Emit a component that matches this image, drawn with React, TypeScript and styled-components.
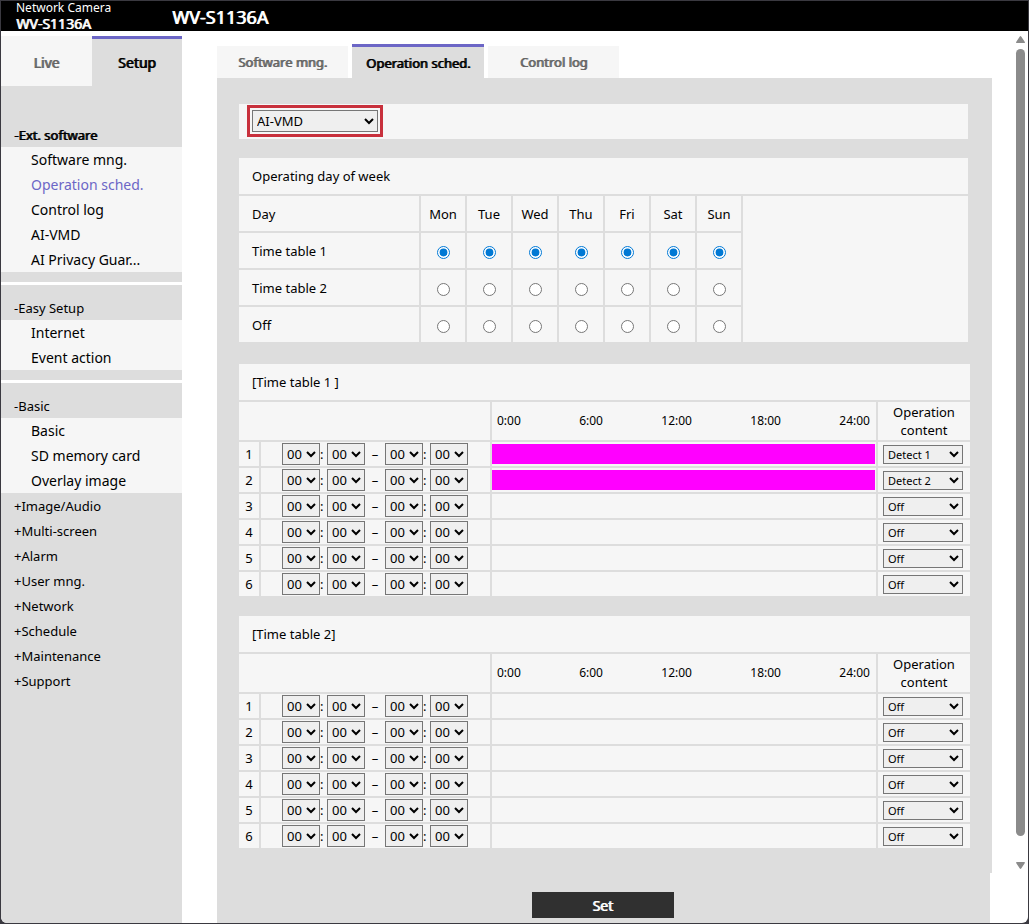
import React from "react";
import styled, { createGlobalStyle, css } from "styled-components";

const accent = "#6c66c6";
const gray = "#dddddd";
const light = "#f6f6f6";

const GlobalStyle = createGlobalStyle`
  * { box-sizing: border-box; }
  body {
    margin: 0;
    background: #3a3940;
    color: #000;
    font: 13px/18px "Noto Sans", sans-serif;
  }
  select, button, input { font-family: inherit; }
`;

const heavy = css`
  text-shadow: 1px 0 currentColor;
`;

const Frame = styled.div`
  min-height: 100vh;
  padding: 1px;
  display: flex;
`;

const Window = styled.div`
  flex: 1;
  min-width: 0;
  display: flex;
  flex-direction: column;
  background: #fff;
  border-radius: 0 0 6px 6px;
`;

const Header = styled.header`
  display: flex;
  height: 30px;
  background: #000;
  color: #fff;
`;

const Brand = styled.div`
  width: 156px;
  margin-left: 15px;
  font-size: 12px;
  line-height: 14px;
`;

const BrandModel = styled.div`
  font-size: 14px;
  line-height: 18px;
  ${heavy}
`;

const Model = styled.h1`
  margin: 0;
  font-size: 18px;
  font-weight: 400;
  line-height: 33px;
  ${heavy}
`;

const Body = styled.div`
  flex: 1;
  display: flex;
  align-items: stretch;
  padding-top: 5px;
`;

const Sidebar = styled.aside`
  width: 181px;
  flex: none;
  border-bottom-left-radius: 6px;
  background: ${gray};
`;

const ModeTabs = styled.div`
  display: flex;
  margin-bottom: 36px;
`;

const ModeTab = styled.button<{ $active?: boolean }>`
  flex: 1;
  height: 50px;
  padding: 0;
  border: 0;
  border-top: 3px solid ${(p) => (p.$active ? accent : light)};
  background: ${(p) => (p.$active ? gray : light)};
  color: ${(p) => (p.$active ? "#000" : "#666")};
  font-size: 14px;
  ${heavy}
`;

const Group = styled.section<{ $divided?: boolean }>`
  ${(p) =>
    p.$divided &&
    css`
      margin-top: 10px;
      padding-top: 10px;
      border-top: 3px solid #fff;
    `}
`;

const GroupLink = styled.a<{ $active?: boolean }>`
  display: block;
  padding: 2px 0 0 13px;
  line-height: 23px;
  color: #000;
  text-decoration: none;
  ${(p) => p.$active && heavy}
`;

const SubList = styled.nav`
  background: ${light};
`;

const SubLink = styled.a<{ $active?: boolean }>`
  display: block;
  padding-left: 30px;
  font-size: 14px;
  line-height: 25px;
  color: ${(p) => (p.$active ? accent : "#000")};
  text-decoration: none;
`;

const Main = styled.main`
  flex: 1;
  min-width: 0;
  display: flex;
  flex-direction: column;
  padding: 8px 24px 0 35px;
`;

const PageTabs = styled.div`
  display: flex;
  align-items: flex-end;
  gap: 4px;
`;

const PageTab = styled.button<{ $active?: boolean }>`
  width: ${(p) => (p.$active ? 132 : 131)}px;
  height: ${(p) => (p.$active ? 34 : 32)}px;
  padding: 0;
  border: 0;
  border-top: ${(p) => (p.$active ? `3px solid ${accent}` : "0")};
  background: ${(p) => (p.$active ? gray : light)};
  color: ${(p) => (p.$active ? "#000" : "#666")};
  font-size: 13px;
  ${heavy}
`;

const Form = styled.form`
  flex: 1;
  display: flex;
  flex-direction: column;
`;

const Panel = styled.div`
  padding: 26px 20px 7px;
  background: ${gray};
`;

const AppBar = styled.div`
  margin: 0 4px 17px 2px;
  padding: 1px 0 2px 8px;
  display: flex;
  background: ${light};
`;

const Highlight = styled.div`
  display: flex;
  padding: 2px;
  border: 3px solid #c8303c;
`;

const Select = styled.select<{ $kind: "app" | "time" | "operation" }>`
  width: ${(p) => ({ app: 126, time: 38, operation: 80 })[p.$kind]}px;
  height: ${(p) => (p.$kind === "operation" ? 19 : 22)}px;
  padding: 0;
  border: 1px solid #767676;
  border-radius: 0;
  background-color: #efefef;
  color: #000;
  font-size: ${(p) => (p.$kind === "operation" ? 11 : 13)}px;
  vertical-align: middle;
`;

const Table = styled.table<{ $narrow?: boolean }>`
  width: ${(p) => (p.$narrow ? "calc(100% - 2px)" : "100%")};
  margin-bottom: ${(p) => (p.$narrow ? 18 : 16)}px;
  border-spacing: 2px;
  table-layout: fixed;

  th, td {
    padding: 0;
    background: ${light};
    font-weight: 400;
  }
`;

const TitleCell = styled.th`
  height: 36px;
  text-align: left;
  text-indent: 13px;
`;

const DayLabel = styled.th`
  height: 35px;
  text-align: left;
  text-indent: 13px;
`;

const DayCell = styled.td`
  text-align: center;
`;

const Radio = styled.input`
  width: 13px;
  height: 13px;
  margin: 1px 0 0 1px;
  accent-color: #0078d4;
  vertical-align: middle;
`;

const HeadCell = styled.th`
  height: 38px;
`;

const Scale = styled.div`
  display: flex;
  justify-content: space-between;
  padding: 0 6px 0 5px;
  font-size: 12px;
`;

const NumberCell = styled.th`
  height: 24px;
  text-align: center;
`;

const TimeRange = styled.div`
  display: flex;
  align-items: center;
  padding-left: 21px;
`;

const Mark = styled.span<{ $wide?: boolean }>`
  width: ${(p) => (p.$wide ? 20 : 7)}px;
  text-align: ${(p) => (p.$wide ? "center" : "left")};
`;

const Bar = styled.div`
  height: 20px;
  margin-right: 1px;
  background: #ff00ff;
`;

const OperationCell = styled.td`
  text-align: left;
  line-height: 19px;

  select { margin-left: 5px; }
`;

const Actions = styled.div`
  flex: 1;
  display: flex;
  justify-content: center;
  align-items: flex-start;
  margin-right: 2px;
  padding: 19px 2px 5px 0;
  background: ${gray};
`;

const SetButton = styled.button`
  width: 142px;
  height: 26px;
  border: 0;
  padding: 0;
  background: #303030;
  color: #fff;
  font-size: 14px;
  ${heavy}
`;

const ScrollTrack = styled.div`
  display: flex;
  flex-direction: column;
  align-items: center;
  width: 9px;
  margin-right: 3px;
  padding-bottom: 54px;
`;

const Thumb = styled.div`
  flex: 1;
  width: 9px;
  margin: 6px 0 26px;
  border-radius: 5px;
  background: #8b8b8b;
`;

const Arrow = ({ down }: { down?: boolean }) => (
  <svg width="9" height="7" viewBox="0 0 9 7" fill="#8b8b8b" aria-hidden="true">
    <path
      d={down ? "M1 0h7q1.500 0 .7 1.200L5.200 6.500q-.7.800-1.400 0L.3 1.200Q-.5 0 1 0z" : "M1 7h7q1.500 0 .7-1.200L5.200.5q-.7-.800-1.400 0L.3 5.800Q-.5 7 1 7z"}
    />
  </svg>
);

const days = ["Mon", "Tue", "Wed", "Thu", "Fri", "Sat", "Sun"];
const choices = ["Time table 1", "Time table 2", "Off"];
const hours = Array.from({ length: 24 }, (_, i) => String(i).padStart(2, "0"));
const minutes = Array.from({ length: 60 }, (_, i) => String(i).padStart(2, "0"));
const operations = ["Off", "Detect 1", "Detect 2"];

const groups = [
  { name: "Ext. software", items: ["Software mng.", "Operation sched.", "Control log", "AI-VMD", "AI Privacy Guar..."] },
  { name: "Easy Setup", items: ["Internet", "Event action"] },
  { name: "Basic", items: ["Basic", "SD memory card", "Overlay image"] },
];
const closedGroups = ["Image/Audio", "Multi-screen", "Alarm", "User mng.", "Network", "Schedule", "Maintenance", "Support"];

const TimeSelect = ({ label, values }: { label: string; values: string[] }) => (
  <Select $kind="time" aria-label={label} defaultValue="00">
    {values.map((v) => (
      <option key={v}>{v}</option>
    ))}
  </Select>
);

function DayTable() {
  return (
    <Table $narrow>
      <colgroup>
        <col style={{ width: 180 }} />
        {days.map((d) => (
          <col key={d} style={{ width: 44 }} />
        ))}
        <col />
      </colgroup>
      <tbody>
        <tr>
          <TitleCell colSpan={9}>Operating day of week</TitleCell>
        </tr>
        <tr>
          <DayLabel>Day</DayLabel>
          {days.map((d) => (
            <DayCell key={d} as="th">{d}</DayCell>
          ))}
          <td rowSpan={4} />
        </tr>
        {choices.map((choice, row) => (
          <tr key={choice}>
            <DayLabel>{choice}</DayLabel>
            {days.map((d) => (
              <DayCell key={d}>
                <Radio type="radio" name={d} aria-label={`${d} ${choice}`} defaultChecked={row === 0} />
              </DayCell>
            ))}
          </tr>
        ))}
      </tbody>
    </Table>
  );
}

function TimeTable({ title, content }: { title: string; content: string[] }) {
  return (
    <Table>
      <colgroup>
        <col style={{ width: 20 }} />
        <col style={{ width: 229 }} />
        <col />
        <col style={{ width: 92 }} />
      </colgroup>
      <tbody>
        <tr>
          <TitleCell colSpan={4}>{title}</TitleCell>
        </tr>
        <tr>
          <HeadCell colSpan={2} />
          <HeadCell>
            <Scale>
              {["0:00", "6:00", "12:00", "18:00", "24:00"].map((t) => (
                <span key={t}>{t}</span>
              ))}
            </Scale>
          </HeadCell>
          <HeadCell>
            Operation
            <br />
            content
          </HeadCell>
        </tr>
        {content.map((op, i) => (
          <tr key={i}>
            <NumberCell>{i + 1}</NumberCell>
            <td>
              <TimeRange>
                <TimeSelect label="Start hour" values={hours} />
                <Mark>:</Mark>
                <TimeSelect label="Start minute" values={minutes} />
                <Mark $wide>–</Mark>
                <TimeSelect label="End hour" values={hours} />
                <Mark>:</Mark>
                <TimeSelect label="End minute" values={minutes} />
              </TimeRange>
            </td>
            <td>{op !== "Off" && <Bar />}</td>
            <OperationCell>
              <Select $kind="operation" aria-label="Operation content" defaultValue={op}>
                {operations.map((o) => (
                  <option key={o}>{o}</option>
                ))}
              </Select>
            </OperationCell>
          </tr>
        ))}
      </tbody>
    </Table>
  );
}

export default function App() {
  return (
    <Frame>
      <GlobalStyle />
      <Window>
        <Header>
          <Brand>
            Network Camera
            <BrandModel>WV-S1136A</BrandModel>
          </Brand>
          <Model>WV-S1136A</Model>
        </Header>
        <Body>
          <Sidebar>
            <ModeTabs>
              <ModeTab>Live</ModeTab>
              <ModeTab $active>Setup</ModeTab>
            </ModeTabs>
            {groups.map((g, i) => (
              <Group key={g.name} $divided={i > 0}>
                <GroupLink href="#" $active={i === 0}>-{g.name}</GroupLink>
                <SubList>
                  {g.items.map((item) => (
                    <SubLink key={item} href="#" $active={item === "Operation sched."}>{item}</SubLink>
                  ))}
                </SubList>
              </Group>
            ))}
            {closedGroups.map((name) => (
              <GroupLink key={name} href="#">+{name}</GroupLink>
            ))}
          </Sidebar>
          <Main>
            <PageTabs>
              <PageTab>Software mng.</PageTab>
              <PageTab $active>Operation sched.</PageTab>
              <PageTab>Control log</PageTab>
            </PageTabs>
            <Form onSubmit={(e) => e.preventDefault()}>
              <Panel>
                <AppBar>
                  <Highlight>
                    <Select $kind="app" aria-label="Application" defaultValue="AI-VMD">
                      <option>AI-VMD</option>
                      <option>AI Privacy Guard</option>
                    </Select>
                  </Highlight>
                </AppBar>
                <DayTable />
                <TimeTable title="[Time table 1 ]" content={["Detect 1", "Detect 2", "Off", "Off", "Off", "Off"]} />
                <TimeTable title="[Time table 2]" content={["Off", "Off", "Off", "Off", "Off", "Off"]} />
              </Panel>
              <Actions>
                <SetButton type="submit">Set</SetButton>
              </Actions>
            </Form>
          </Main>
          <ScrollTrack>
            <Arrow />
            <Thumb />
            <Arrow down />
          </ScrollTrack>
        </Body>
      </Window>
    </Frame>
  );
}
